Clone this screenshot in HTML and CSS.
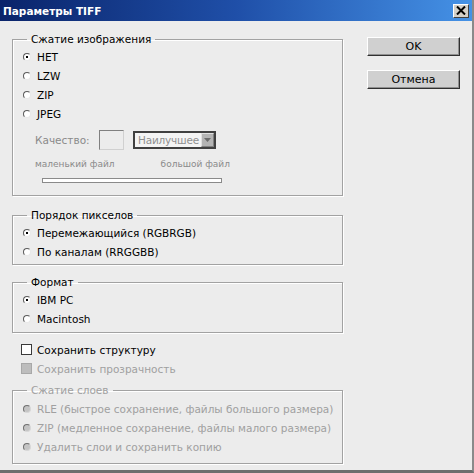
FILE: index.html
```html
<!DOCTYPE html>
<html lang="ru">
<head>
<meta charset="utf-8">
<title>Параметры TIFF</title>
<link rel="stylesheet" href="styles.css">
</head>
<body>
<div class="window">
  <div class="titlebar">
    <span class="title">Параметры TIFF</span>
    <span class="close"><svg width="10" height="9" viewBox="0 0 10 9"><path d="M1 0.5 L9 8.5 M9 0.5 L1 8.5" stroke="#000" stroke-width="2"/></svg></span>
  </div>
  <div class="content">
    <div class="left">
      <fieldset class="group g1">
        <legend>Сжатие изображения</legend>
        <div class="rows">
          <div class="opt"><span class="radio checked"></span>НЕТ</div>
          <div class="opt"><span class="radio"></span>LZW</div>
          <div class="opt"><span class="radio"></span>ZIP</div>
          <div class="opt"><span class="radio"></span>JPEG</div>
        </div>
        <div class="quality">
          <span class="qlabel">Качество:</span>
          <span class="qinput"></span>
          <span class="select"><span class="seltext">Наилучшее</span><span class="selbtn"><svg width="7" height="4" viewBox="0 0 7 4"><path d="M0 0 H7 L3.5 4 Z" fill="#6a6a6a"/></svg></span></span>
        </div>
        <div class="scale"><span>маленький файл</span><span>большой файл</span></div>
        <div class="slider"></div>
      </fieldset>

      <fieldset class="group g2">
        <legend>Порядок пикселов</legend>
        <div class="rows">
          <div class="opt"><span class="radio checked"></span>Перемежающийся (RGBRGB)</div>
          <div class="opt"><span class="radio"></span>По каналам (RRGGBB)</div>
        </div>
      </fieldset>

      <fieldset class="group g3">
        <legend>Формат</legend>
        <div class="rows">
          <div class="opt"><span class="radio checked"></span>IBM PC</div>
          <div class="opt"><span class="radio"></span>Macintosh</div>
        </div>
      </fieldset>

      <div class="checks">
        <div class="chk"><span class="box"></span>Сохранить структуру</div>
        <div class="chk disabled"><span class="box"></span>Сохранить прозрачность</div>
      </div>

      <fieldset class="group g4 disabled">
        <legend>Сжатие слоев</legend>
        <div class="rows">
          <div class="opt"><span class="radio"></span>RLE (быстрое сохранение, файлы большого размера)</div>
          <div class="opt"><span class="radio"></span>ZIP (медленное сохранение, файлы малого размера)</div>
          <div class="opt"><span class="radio"></span>Удалить слои и сохранить копию</div>
        </div>
      </fieldset>
    </div>
    <div class="right">
      <button class="btn">OK</button>
      <button class="btn">Отмена</button>
    </div>
  </div>
</div>
</body>
</html>
```

FILE: styles.css
```css
* { box-sizing: border-box; }
html, body { margin: 0; padding: 0; }
body {
  width: 474px;
  height: 473px;
  overflow: hidden;
  background: #d8d8d8;
  font-family: "DejaVu Sans", sans-serif;
  font-size: 10.5px;
  color: #000;
}
.window {
  width: 474px;
  height: 473px;
  background: #ececec;
  border-right: 2px solid #8a8a8a;
  border-bottom: 3px solid #6e6e6e;
  display: flex;
  flex-direction: column;
}
.titlebar {
  height: 21px;
  flex: none;
  background: linear-gradient(to right, #0a246a 0%, #1f4fa8 50%, #4592e6 100%);
  display: flex;
  align-items: center;
  justify-content: space-between;
  padding: 0 3px 0 3px;
}
.title {
  color: #fff;
  font-weight: bold;
  font-size: 10.5px;
}
.close {
  width: 16px;
  height: 14px;
  background: #d4d0c8;
  border: 1px solid;
  border-color: #fff #404040 #404040 #fff;
  display: flex;
  align-items: center;
  justify-content: center;
}
.content {
  display: flex;
  padding: 11px 0 0 12px;
  gap: 24px;
}
.left {
  width: 331px;
  display: flex;
  flex-direction: column;
}
.group {
  margin: 0;
  padding: 0;
  min-width: 0;
  border: 1px solid #a2a2a2;
  box-shadow: 1px 1px 0 #fff, inset 1px 1px 0 #fff;
}
.group legend {
  margin-left: 14px;
  padding: 0 4px;
  line-height: 14px;
}
.group.disabled legend { color: #a0a0a0; }
.rows { padding-top: 1px; }
.g1 { padding-bottom: 12px; }
.g2 { margin-top: 12px; padding-bottom: 3px; }
.g3 { margin-top: 10px; padding-bottom: 4px; }
.g4 { margin-top: 5px; padding-bottom: 7px; }
.g4 .rows { padding-top: 2px; }
.opt {
  height: 19px;
  display: flex;
  align-items: center;
  padding-left: 10px;
  white-space: nowrap;
}
.radio {
  width: 8px;
  height: 8px;
  flex: none;
  margin-right: 6px;
  border-radius: 50%;
  border: 1px solid;
  border-color: #5a5a5a #e8e8e8 #e8e8e8 #5a5a5a;
  background: #fff;
  position: relative;
}
.radio.checked::after {
  content: "";
  position: absolute;
  left: 2px;
  top: 2px;
  width: 2px;
  height: 2px;
  background: #000;
}
.disabled .opt { color: #a0a0a0; }
.disabled .radio {
  background: #c4c4c4;
  border-color: #707070 #d8d8d8 #d8d8d8 #707070;
}
.quality {
  margin-top: 7px;
  height: 20px;
  display: flex;
  align-items: center;
  padding-left: 22px;
}
.qlabel { color: #8a8a8a; width: 64px; }
.qinput {
  width: 25px;
  height: 20px;
  border: 1px solid;
  border-color: #808080 #d0d0d0 #d0d0d0 #808080;
  background: #ececec;
}
.select {
  margin-left: 9px;
  width: 83px;
  height: 18px;
  display: flex;
  align-items: center;
  justify-content: space-between;
  border: 2px solid #404040;
  background: #f4f4f4;
  padding-left: 3px;
}
.seltext { color: #909090; font-size: 10.5px; letter-spacing: -0.2px; }
.selbtn {
  width: 13px;
  height: 14px;
  background: #b4b4b4;
  border: 1px solid;
  border-color: #e0e0e0 #808080 #808080 #e0e0e0;
  display: flex;
  align-items: center;
  justify-content: center;
}
.scale {
  margin-top: 8px;
  height: 12px;
  line-height: 12px;
  font-size: 9px;
  color: #8a8a8a;
  display: flex;
  padding-left: 22px;
  gap: 46px;
}
.slider {
  margin: 8px 0 0 29px;
  width: 180px;
  height: 5px;
  border: 1px solid #8a8a8a;
  background: #fff;
}
.checks { margin-top: 7px; }
.chk {
  height: 19px;
  display: flex;
  align-items: center;
  padding-left: 9px;
}
.chk .box {
  width: 11px;
  height: 11px;
  flex: none;
  margin-right: 5px;
  border: 1px solid #3a3a3a;
  background: #fff;
}
.chk.disabled { color: #a0a0a0; }
.chk.disabled .box {
  background: #bdbdbd;
  border-color: #a8a8a8;
}
.right {
  display: flex;
  flex-direction: column;
  gap: 14px;
  padding-top: 5px;
}
.btn {
  width: 93px;
  height: 19px;
  padding: 0;
  font-family: inherit;
  font-size: 11px;
  color: #000;
  background: #d0d0d0;
  border: 1px solid;
  border-color: #ffffff #303030 #303030 #ffffff;
  box-shadow: inset -1px -1px 0 #909090;
}
```
